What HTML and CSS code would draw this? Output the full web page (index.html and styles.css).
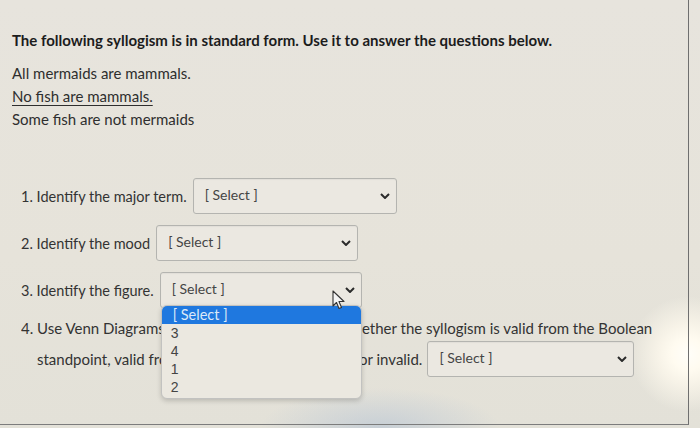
FILE: index.html
```html
<!DOCTYPE html>
<html lang="en">
<head>
<meta charset="utf-8">
<title>Syllogism question</title>
<link rel="stylesheet" href="styles.css">
</head>
<body>
<div class="page">
  <div class="question">
    <p class="title">The following syllogism is in standard form. Use it to answer the questions below.</p>
    <div class="premises">
      <p>All mermaids are mammals.</p>
      <p class="underlined">No fish are mammals.</p>
      <p>Some fish are not mermaids</p>
    </div>
    <div class="items">
      <div class="item">
        <span class="label">1. Identify the major term.</span>
        <div class="select sel-1"><span>[ Select ]</span><svg class="chev" viewBox="0 0 10 6" width="10" height="6"><path d="M1 1 L5 5 L9 1" fill="none" stroke="#2b2b2b" stroke-width="2"/></svg></div>
      </div>
      <div class="item">
        <span class="label">2. Identify the mood</span>
        <div class="select sel-2"><span>[ Select ]</span><svg class="chev" viewBox="0 0 10 6" width="10" height="6"><path d="M1 1 L5 5 L9 1" fill="none" stroke="#2b2b2b" stroke-width="2"/></svg></div>
      </div>
      <div class="item">
        <span class="label">3. Identify the figure.</span>
        <div class="select-wrap">
          <div class="select sel-3"><span>[ Select ]</span><svg class="chev" viewBox="0 0 10 6" width="10" height="6"><path d="M1 1 L5 5 L9 1" fill="none" stroke="#2b2b2b" stroke-width="2"/></svg></div>
          <ul class="dropdown">
            <li class="active">[ Select ]</li>
            <li>3</li>
            <li>4</li>
            <li>1</li>
            <li>2</li>
          </ul>
          <svg class="cursor" viewBox="0 0 13 20" width="13" height="20"><path d="M1 1 L1 16 L4.5 12.5 L7 18.5 L9.5 17.5 L7 11.5 L12 11.5 Z" fill="#f4f4f4" stroke="#333" stroke-width="1.1" stroke-linejoin="round"/></svg>
        </div>
      </div>
      <div class="item-4">
        <div class="line-a">
          <span class="cut cut-a">4. Use Venn Diagrams to determine wh</span><span>ether the syllogism is valid from the Boolean</span>
        </div>
        <div class="line-b">
          <span class="cut cut-b">standpoint, valid from the Aristotelian standpoint,</span><span class="tail">or invalid.</span>
          <div class="select sel-4"><span>[ Select ]</span><svg class="chev" viewBox="0 0 10 6" width="10" height="6"><path d="M1 1 L5 5 L9 1" fill="none" stroke="#2b2b2b" stroke-width="2"/></svg></div>
        </div>
      </div>
    </div>
  </div>
</div>
</body>
</html>
```

FILE: styles.css
```css
html, body {
  margin: 0;
  padding: 0;
}
body {
  width: 700px;
  height: 428px;
  overflow: hidden;
  font-family: Lato, "Open Sans", sans-serif;
  color: #333;
  background:
    radial-gradient(circle at 688px 354px, #fffef9 0, #fffbf0 16px, rgba(255,250,238,0.7) 30px, rgba(255,250,238,0) 58px),
    radial-gradient(ellipse 120px 40px at 380px 428px, rgba(176,192,212,0.55), rgba(176,192,212,0)),
    linear-gradient(180deg, #e7e4dd 0%, #e6e3da 60%, #e3e1d8 100%);
}
.page {
  width: 689px;
  height: 425px;
  border-right: 1px solid #6f6f6f;
  border-bottom: 1px solid #7c7c7c;
  box-sizing: border-box;
}
.question {
  padding: 30px 0 0 12px;
}
p {
  margin: 0;
}
.title {
  font-size: 15px;
  line-height: 20px;
  font-weight: 700;
  color: #1c1c1c;
}
.premises {
  margin-top: 12px;
  font-size: 15px;
  line-height: 23px;
  color: #2e2e2e;
}
.underlined {
  text-decoration: underline;
  text-underline-offset: 3px;
}
.items {
  margin-top: 47px;
  padding-left: 9px;
  display: flex;
  flex-direction: column;
  font-size: 14.5px;
  color: #333;
}
.item {
  display: flex;
  align-items: center;
  gap: 6px;
  margin-bottom: 11px;
}
.select {
  height: 36px;
  box-sizing: border-box;
  border: 1px solid #b4b4b0;
  border-radius: 3px;
  background: #ebe8e1;
  display: flex;
  align-items: center;
  justify-content: space-between;
  padding: 0 6px 0 11px;
  font-size: 14px;
  color: #454545;
  box-shadow: inset 0 1px 1px rgba(0,0,0,0.04);
}
.select span {
  margin-top: -4px;
}
.chev {
  display: block;
}
.sel-1 { width: 204px; }
.sel-2 { width: 202px; }
.sel-3 { width: 202px; }
.sel-4 { width: 207px; }
.select-wrap {
  position: relative;
}
.dropdown {
  position: absolute;
  left: 1px;
  top: 33px;
  width: 199px;
  margin: 0;
  padding: 0 0 2px;
  list-style: none;
  background: #ebe8e0;
  border: 1px solid #c2c2c0;
  border-radius: 6px;
  box-shadow: 0 2px 5px rgba(0,0,0,0.18);
  font-family: "Liberation Sans", Arial, sans-serif;
  font-size: 14px;
  color: #444;
  overflow: hidden;
  z-index: 2;
}
.dropdown li {
  height: 18px;
  line-height: 18px;
  padding-left: 9px;
}
.dropdown li.active {
  background: #1f78df;
  color: #dce9f8;
  font-family: Lato, sans-serif;
  font-size: 14.5px;
  padding-left: 11px;
}
.cursor {
  position: absolute;
  left: 172px;
  top: 18px;
  z-index: 3;
}
.item-4 {
  margin-top: -3px;
  font-size: 15px;
}
.line-a {
  display: flex;
  line-height: 24px;
  white-space: nowrap;
}
.cut {
  display: inline-block;
  overflow: hidden;
  white-space: nowrap;
}
.cut-a { width: 341px; }
.line-b {
  display: flex;
  align-items: center;
  white-space: nowrap;
  margin-top: 1px;
}
.cut-b {
  width: 322px;
  margin-left: 16px;
}
.tail {
  margin-right: 5px;
}
```
